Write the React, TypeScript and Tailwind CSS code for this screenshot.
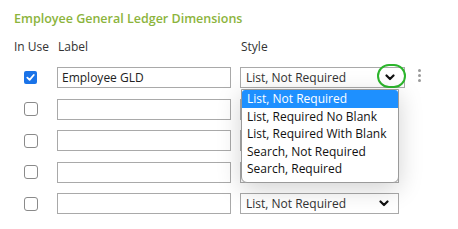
import React from "react";

const font = { fontFamily: '"Open Sans", "Noto Sans", sans-serif' };

function Check({ checked }: { checked?: boolean }) {
  return checked ? (
    <div className="w-[13px] h-[13px] rounded-[2px] bg-[#1a73e8] flex items-center justify-center">
      <svg width="9" height="9" viewBox="0 0 10 10">
        <path d="M1.5 5.2 L4 7.6 L8.6 2.2" fill="none" stroke="white" strokeWidth="2" strokeLinecap="round" strokeLinejoin="round" />
      </svg>
    </div>
  ) : (
    <div className="w-[14px] h-[14px] rounded-[3px] border border-[#8a8a8a] bg-white" />
  );
}

function Chevron() {
  return (
    <svg width="10" height="7" viewBox="0 0 10 7">
      <path d="M1.5 1.5 L5 5 L8.5 1.5" fill="none" stroke="#111" strokeWidth="2.2" strokeLinecap="round" strokeLinejoin="round" />
    </svg>
  );
}

function Select({ wide, value }: { wide?: boolean; value?: string }) {
  return (
    <div className={`${wide ? "w-[165px]" : "w-[159px]"} h-[21px] border border-[#a9a9a9] bg-white flex items-center pl-[5px] pr-[9px] text-[12px] text-[#333]`}>
      <span className="flex-1 truncate">{value}</span>
      <Chevron />
    </div>
  );
}

const options = [
  "List, Not Required",
  "List, Required No Blank",
  "List, Required With Blank",
  "Search, Not Required",
  "Search, Required",
];

export default function App() {
  const rows = [0, 1, 2, 3, 4];
  return (
    <div className="w-[458px] h-[229px] bg-white relative overflow-hidden" style={font}>
      <div className="pl-[14px] pt-[9px]">
        <div className="text-[12.5px] font-semibold text-[#8cb43c] leading-[20px]">Employee General Ledger Dimensions</div>
        <div className="flex text-[12px] text-[#333] mt-[10px] leading-[16px]">
          <div className="w-[44px]">In Use</div>
          <div className="w-[183px]">Label</div>
          <div>Style</div>
        </div>
        <div className="flex flex-col gap-[10.5px] mt-[12px]">
          {rows.map((i) => (
            <div key={i} className="flex items-center h-[21px]">
              <div className="w-[43px] pl-[10px] flex">
                <Check checked={i === 0} />
              </div>
              <div className="w-[174px] h-[21px] border border-[#a9a9a9] bg-white flex items-center px-[4px] text-[12px] text-[#222]">
                {i === 0 ? "Employee GLD" : ""}
              </div>
              <div className="ml-[9px] relative">
                {i === 0 ? <Select wide value="List, Not Required" /> : <Select value={i === 4 ? "List, Not Required" : ""} />}
                {i === 0 && (
                  <>
                    <div className="absolute left-[137px] top-[-3px] w-[29px] h-[24px] rounded-full border-2 border-[#2cb52c]" />
                    <div className="absolute left-[178px] top-[2px] flex flex-col gap-[2px]">
                      <div className="w-[3px] h-[3px] rounded-full bg-[#9a9a9a]" />
                      <div className="w-[3px] h-[3px] rounded-full bg-[#9a9a9a]" />
                      <div className="w-[3px] h-[3px] rounded-full bg-[#9a9a9a]" />
                    </div>
                    <div className="absolute left-[1px] top-[22px] w-[158px] bg-white border border-[#9a9a9a] rounded-b-[6px] shadow-[0_6px_24px_rgba(0,0,0,0.18)] z-10 pb-[4px] text-[12px]">
                      {options.map((o, k) => (
                        <div
                          key={o}
                          className={`h-[17.5px] leading-[17.5px] pl-[5px] ${k === 0 ? "bg-[#1e90ff] text-white rounded-t-[3px]" : "text-[#111]"}`}
                        >
                          {o}
                        </div>
                      ))}
                    </div>
                  </>
                )}
              </div>
            </div>
          ))}
        </div>
      </div>
    </div>
  );
}
